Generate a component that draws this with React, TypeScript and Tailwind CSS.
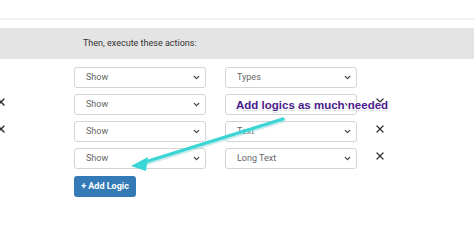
import { ChevronDown, X } from 'lucide-react'

type Row = {
  action: string
  target: string
  left: boolean
  right: boolean
}

const rows: Row[] = [
  { action: 'Show', target: 'Types', left: false, right: false },
  { action: 'Show', target: '', left: true, right: true },
  { action: 'Show', target: 'Text', left: true, right: true },
  { action: 'Show', target: 'Long Text', left: false, right: true },
]

const FakeSelect = ({ value }: { value: string }) => (
  <div className="flex h-[21px] w-[132px] items-center justify-between rounded-[3px] border border-[#d4d4d4] bg-white pl-[11px] pr-[4px] text-[9px] text-[#666]">
    <span>{value}</span>
    <ChevronDown className="h-[9px] w-[9px] text-[#444]" strokeWidth={3.5} />
  </div>
)

export default function App() {
  return (
    <div className="relative h-[240px] w-[474px] overflow-hidden bg-white font-['Roboto',sans-serif]">
      <div className="h-[20px] border-b-2 border-[#f1f1f1]" />
      <div className="mt-[8px] flex h-[31px] items-center bg-[#e4e4e4] pl-[83px] text-[9px] text-[#333]">
        Then, execute these actions:
      </div>

      <div className="mt-[8px] flex flex-col gap-[6px]">
        {rows.map((row, i) => (
          <div key={i} className="flex items-center">
            <div className="flex w-[74px] justify-start">
              {row.left && <X className="-ml-[5px] -mt-[6px] h-[12px] w-[12px] text-[#333]" strokeWidth={3} />}
            </div>
            <FakeSelect value={row.action} />
            <div className="w-[19px]" />
            <FakeSelect value={row.target} />
            <div className="flex w-[46px] justify-center">
              {row.right && <X className="-mt-[6px] h-[12px] w-[12px] text-[#333]" strokeWidth={2.5} />}
            </div>
          </div>
        ))}
      </div>

      <div className="mt-[7px] pl-[74px]">
        <button className="flex h-[21px] w-[62px] items-center justify-center rounded-[3px] bg-[#337ab7] text-[9px] font-bold text-white">
          + Add Logic
        </button>
      </div>

      <svg className="absolute left-0 top-0" width="474" height="240" viewBox="0 0 474 240">
        <line x1="283" y1="120" x2="142" y2="164" stroke="#9ad9dc" strokeWidth="5" strokeLinecap="round" opacity="0.5" />
        <line x1="283" y1="119" x2="142" y2="163" stroke="#3ad6d6" strokeWidth="3" strokeLinecap="round" />
        <polygon points="131,166 148,157 146,171" fill="#3ad6d6" />
      </svg>

      <div className="absolute left-[236px] top-[100px] font-['Liberation_Sans',sans-serif] text-[11.5px] font-bold leading-none text-[#4a1b8c] [text-shadow:-1px_-1px_0_#fff,1px_-1px_0_#fff,-1px_1px_0_#fff,1px_1px_0_#fff,0_1px_2px_#666]">
        Add logics as much needed
      </div>
    </div>
  )
}
